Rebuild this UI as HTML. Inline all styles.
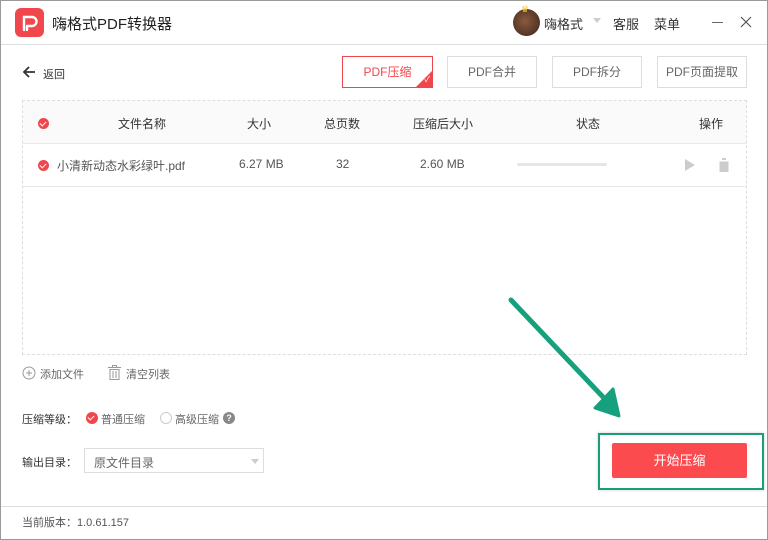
<!DOCTYPE html>
<html><head><meta charset="utf-8"><style>
*{margin:0;padding:0;box-sizing:border-box}
body{width:768px;height:540px;position:relative;background:#fff;font-family:"Liberation Sans","Noto Sans CJK SC",sans-serif;color:#333;overflow:hidden;font-size:12px}
.a{position:absolute;white-space:nowrap}
.frame{position:absolute;left:0;top:0;width:768px;height:540px;border:1px solid #9a9a9a}
.tab{position:absolute;top:56px;height:32px;border:1px solid #ddd;text-align:center;line-height:30px;color:#666;font-size:12px}
.chk{position:absolute;width:11px;height:11px;border-radius:50%;background:#f0474c}
.chk:after{content:"";position:absolute;left:3px;top:2px;width:3px;height:5px;border:solid #fff;border-width:0 1.5px 1.5px 0;transform:rotate(45deg)}
</style></head><body>
<div class="frame"></div>
<div class="a" style="left:15px;top:8px;width:29px;height:29px;border-radius:6px;background:#f0474c"></div>
<svg class="a" style="left:15px;top:8px" width="29" height="29" viewBox="0 0 29 29"><path d="M9 22 V9 h8 a4.5 4.5 0 0 1 0 9 h-5 M12 22 v-3" stroke="#fff" stroke-width="2.4" fill="none" stroke-linecap="round"/></svg>
<div class="a" style="left:52px;top:13px;font-size:15px;color:#222">嗨格式PDF转换器</div>
<div class="a" style="left:1px;top:44px;width:766px;height:1px;background:#ddd"></div>
<div class="a" style="left:513px;top:9px;width:27px;height:27px;border-radius:50%;background:radial-gradient(circle at 45% 45%,#8a5a40,#3a2418)"></div>
<div class="a" style="left:521px;top:4px;color:#f5c518;font-size:9px">♛</div>
<div class="a" style="left:544px;top:14px;font-size:13px">嗨格式</div>
<div class="a" style="left:593px;top:18px;border-left:4px solid transparent;border-right:4px solid transparent;border-top:5px solid #ccc"></div>
<div class="a" style="left:613px;top:14px;font-size:13px">客服</div>
<div class="a" style="left:654px;top:14px;font-size:13px">菜单</div>
<div class="a" style="left:712px;top:22px;width:11px;height:1px;background:#666"></div>
<svg class="a" style="left:740px;top:16px" width="12" height="12"><path d="M1 1L11 11M11 1L1 11" stroke="#555" stroke-width="1.2"/></svg>
<svg class="a" style="left:22px;top:66px" width="14" height="12"><path d="M13 6H2M7 1L2 6L7 11" stroke="#333" stroke-width="1.8" fill="none"/></svg>
<div class="a" style="left:43px;top:66px;font-size:11px">返回</div>
<div class="tab" style="left:342px;width:91px;border-color:#f0474c;color:#f0474c;overflow:hidden">PDF压缩<div class="a" style="right:-1px;bottom:-1px;width:0;height:0;border-left:18px solid transparent;border-bottom:18px solid #f0474c"></div><div class="a" style="right:2px;bottom:3px;color:#fff;font-size:8px;line-height:8px">✓</div></div>
<div class="tab" style="left:447px;width:90px">PDF合并</div>
<div class="tab" style="left:552px;width:90px">PDF拆分</div>
<div class="tab" style="left:657px;width:90px">PDF页面提取</div>
<div class="a" style="left:22px;top:100px;width:725px;height:255px;border:1px dashed #ddd"></div>
<div class="a" style="left:23px;top:101px;width:723px;height:43px;background:#fafafa;border-bottom:1px solid #e8e8e8"></div>
<div class="a" style="left:23px;top:186px;width:723px;height:1px;background:#e8e8e8"></div>
<div class="chk" style="left:38px;top:118px"></div>
<div class="a" style="left:118px;top:115px">文件名称</div>
<div class="a" style="left:247px;top:115px">大小</div>
<div class="a" style="left:324px;top:115px">总页数</div>
<div class="a" style="left:413px;top:115px">压缩后大小</div>
<div class="a" style="left:576px;top:115px">状态</div>
<div class="a" style="left:699px;top:115px">操作</div>
<div class="chk" style="left:38px;top:160px"></div>
<div class="a" style="left:57px;top:157px;color:#555">小清新动态水彩绿叶.pdf</div>
<div class="a" style="left:239px;top:157px;color:#555">6.27 MB</div>
<div class="a" style="left:336px;top:157px;color:#555">32</div>
<div class="a" style="left:420px;top:157px;color:#555">2.60 MB</div>
<div class="a" style="left:517px;top:163px;width:90px;height:3px;border-radius:2px;background:#e6e6e6"></div>
<div class="a" style="left:685px;top:159px;border-top:6px solid transparent;border-bottom:6px solid transparent;border-left:10px solid #ccc"></div>
<svg class="a" style="left:718px;top:158px" width="12" height="14"><path d="M0 2h12M4 2V0h4v2M1.5 3.5h9V14h-9z" fill="#ccc"/></svg>
<svg class="a" style="left:22px;top:366px" width="14" height="14"><circle cx="7" cy="7" r="6" stroke="#999" fill="none"/><path d="M7 4v6M4 7h6" stroke="#999"/></svg>
<div class="a" style="left:40px;top:366px;color:#666;font-size:11px">添加文件</div>
<svg class="a" style="left:108px;top:365px" width="13" height="15"><path d="M0 2.5h13M4.5 2.5V.5h4v2M2 4.5h9V14.5H2zM5 6v7M8 6v7" stroke="#999" fill="none"/></svg>
<div class="a" style="left:126px;top:366px;color:#666;font-size:11px">清空列表</div>
<div class="a" style="left:22px;top:411px;font-size:11px">压缩等级：</div>
<div class="chk" style="left:86px;top:412px;width:12px;height:12px"></div>
<div class="a" style="left:101px;top:411px;color:#666;font-size:11px">普通压缩</div>
<div class="a" style="left:160px;top:412px;width:12px;height:12px;border-radius:50%;border:1px solid #ccc"></div>
<div class="a" style="left:175px;top:411px;color:#666;font-size:11px">高级压缩</div>
<div class="a" style="left:223px;top:412px;width:12px;height:12px;border-radius:50%;background:#888;color:#fff;font-size:9px;line-height:12px;text-align:center;font-weight:bold">?</div>
<div class="a" style="left:22px;top:454px;font-size:11px">输出目录：</div>
<div class="a" style="left:84px;top:448px;width:180px;height:25px;border:1px solid #ddd"></div>
<div class="a" style="left:94px;top:454px;color:#666">原文件目录</div>
<div class="a" style="left:251px;top:459px;border-left:4px solid transparent;border-right:4px solid transparent;border-top:5px solid #ccc"></div>
<div class="a" style="left:598px;top:433px;width:166px;height:57px;border:2px solid #1a9e7a;box-shadow:0 0 3px rgba(0,0,0,.2)"></div>
<div class="a" style="left:612px;top:443px;width:135px;height:35px;background:#fc4b4f;border-radius:2px;color:#fff;text-align:center;line-height:35px;font-size:13px">开始压缩</div>
<svg class="a" style="left:500px;top:290px" width="140" height="140"><path d="M11 10L103 107" stroke="#16a07e" stroke-width="5" stroke-linecap="round"/><path d="M119 126L95 118L113 99Z" fill="#16a07e" stroke="#16a07e" stroke-width="3" stroke-linejoin="round"/></svg>
<div class="a" style="left:1px;top:506px;width:766px;height:1px;background:#ddd"></div>
<div class="a" style="left:22px;top:514px;color:#555;font-size:11px">当前版本：1.0.61.157</div>
</body></html>
